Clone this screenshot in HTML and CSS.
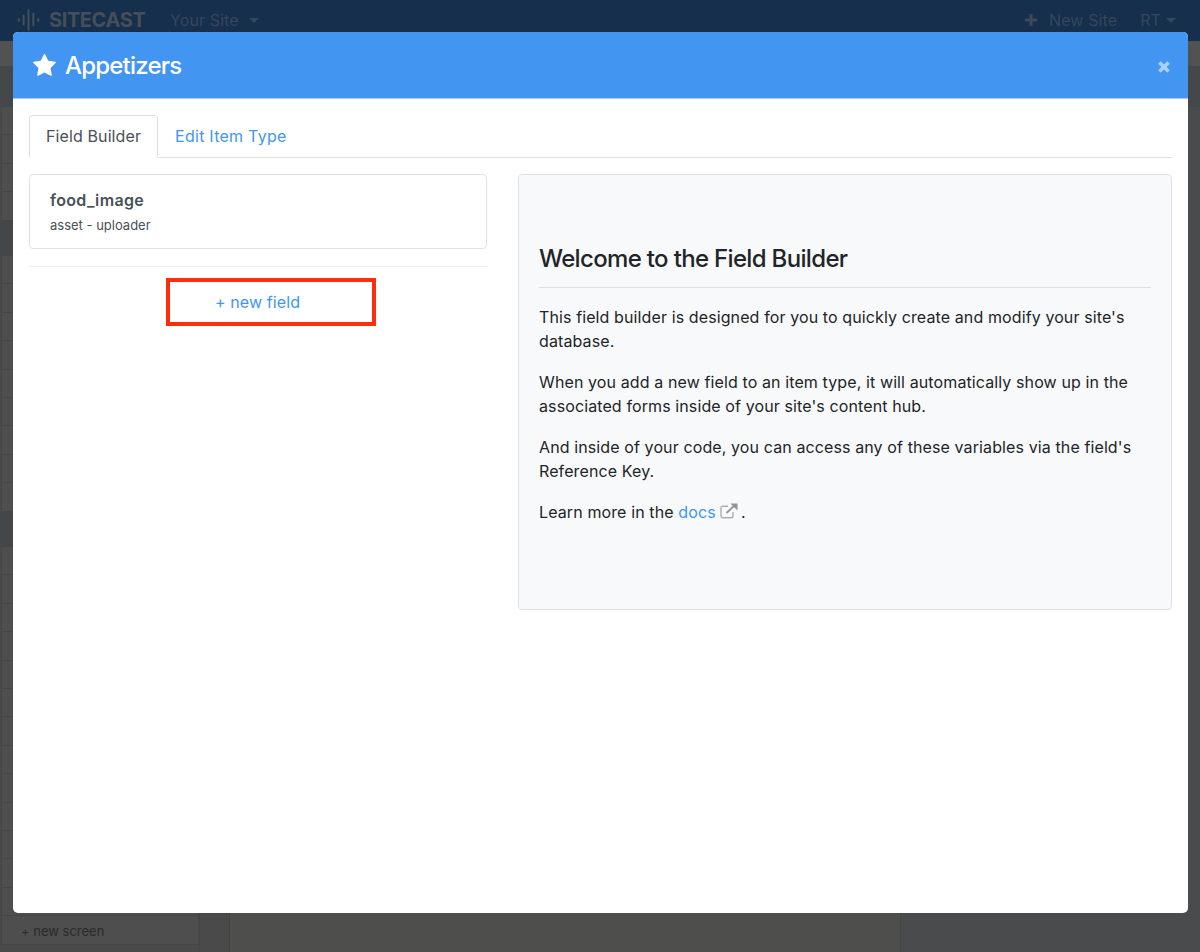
FILE: index.html
```html
<!DOCTYPE html>
<html lang="en">
<head>
<meta charset="utf-8">
<title>Appetizers - Field Builder</title>
<link rel="stylesheet" href="styles.css">
</head>
<body>
<div class="page">
  <header class="topbar">
    <div class="brand">
      <svg class="logo" viewBox="0 0 26 26" aria-hidden="true"><path d="M2 11v4M7.500 7v12M13 1v24M18.500 5v15M24 11v4"/></svg>
      <span class="brand-name">SITECAST</span>
    </div>
    <span class="site-menu">Your Site<i class="caret"></i></span>
    <span class="new-site">
      <svg class="plus" viewBox="0 0 12 12" aria-hidden="true"><path d="M4.500 0h3v4.500H12v3H7.500V12h-3V7.500H0v-3h4.500z"/></svg>
      New Site
    </span>
    <span class="user-menu">RT<i class="caret"></i></span>
  </header>
  <div class="subbar"></div>
  <div class="band"></div>
  <div class="workspace">
    <aside class="sidebar">
      <ul class="rows">
        <li></li><li></li><li></li><li></li>
      </ul>
      <div class="group"></div>
      <ul class="rows">
        <li></li><li></li><li></li><li></li><li></li><li></li><li></li><li></li><li></li>
      </ul>
      <div class="group"></div>
      <ul class="rows">
        <li></li><li></li><li></li><li></li><li></li><li></li><li></li><li></li><li></li><li></li><li></li><li></li><li></li>
        <li class="new-screen">+ new screen</li>
      </ul>
    </aside>
    <div class="gutter"></div>
    <main class="canvas"></main>
    <div class="inspector"></div>
  </div>
</div>

<div class="overlay">
  <section class="modal">
    <header class="modal-header">
      <svg class="star" viewBox="0 0 1664 1600" aria-hidden="true"><path d="M1664 615q0 22-26 48l-363 354 86 500q1 7 1 20 0 21-10.500 35.500T1321 1587q-19 0-40-12l-449-236-449 236q-22 12-40 12-21 0-31.500-14.500T301 1537q0-6 2-20l86-500L25 663Q0 636 0 615q0-37 56-46l502-73L783 41q19-41 49-41t49 41l225 455 502 73q56 9 56 46z"/></svg>
      <h1 class="modal-title">Appetizers</h1>
      <svg class="close" viewBox="0 0 12 12" aria-label="Close"><path d="M1 3.200 3.200 1 6 3.800 8.800 1 11 3.200 8.200 6 11 8.800 8.800 11 6 8.200 3.200 11 1 8.800 3.800 6z"/></svg>
    </header>
    <div class="modal-body">
      <nav class="tabs">
        <a class="tab active">Field Builder</a>
        <a class="tab">Edit Item Type</a>
      </nav>
      <div class="columns">
        <div class="fields">
          <div class="field-card">
            <div class="field-name">food_image</div>
            <div class="field-type">asset - uploader</div>
          </div>
          <hr class="rule">
          <div class="new-field-row">
            <a class="new-field">+ new field</a>
            <span class="callout"></span>
          </div>
        </div>
        <div class="welcome">
          <h2 class="welcome-title">Welcome to the Field Builder</h2>
          <hr class="welcome-rule">
          <p>This field builder is designed for you to quickly create and modify your site's database.</p>
          <p>When you add a new field to an item type, it will automatically show up in the associated forms inside of your site's content hub.</p>
          <p>And inside of your code, you can access any of these variables via the field's Reference Key.</p>
          <p class="last">Learn more in the <a class="docs">docs</a>
            <svg class="ext" viewBox="0 0 18 16" aria-hidden="true"><path class="ext-box" d="M13 9v4a1.800 1.800 0 0 1-1.800 1.800H2.800A1.800 1.800 0 0 1 1 13V5a1.800 1.800 0 0 1 1.800-1.800H8"/><path class="ext-arrow" d="M6.500 10 15 2"/><path class="ext-head" d="M10.500 0.500H17.500V7.500L15 5 12.900 3z"/></svg>
            .</p>
        </div>
      </div>
    </div>
  </section>
</div>
</body>
</html>
```

FILE: styles.css
```css
* { box-sizing: border-box; }

html, body {
  margin: 0;
  height: 952px;
  overflow: hidden;
}

body {
  position: relative;
  background: #4a4a4a;
  font-family: Inter, "Liberation Sans", sans-serif;
  font-size: 16px;
  line-height: 24px;
  color: #212529;
  letter-spacing: 0.11px;
}

/* Dimmed page behind the modal */
.page {
  display: flex;
  flex-direction: column;
  height: 952px;
}

.topbar {
  display: flex;
  align-items: center;
  height: 41px;
  flex: none;
  background: #152f4c;
  color: #37465a;
  padding-left: 17px;
  border-bottom: 1px solid #1b2f45;
}

.brand {
  display: flex;
  align-items: center;
  gap: 9px;
  width: 153px;
}

.logo {
  width: 23px;
  height: 24px;
  fill: none;
  stroke: #47505a;
  stroke-width: 2.200;
}

.brand-name {
  font-size: 20px;
  font-weight: 700;
  color: #474e57;
  letter-spacing: -0.4px;
}

.site-menu {
  display: flex;
  align-items: center;
  gap: 10px;
}

.caret {
  width: 0;
  height: 0;
  border-left: 5px solid transparent;
  border-right: 5px solid transparent;
  border-top: 5px solid currentColor;
}

.new-site {
  display: flex;
  align-items: center;
  gap: 12px;
  margin-left: auto;
}

.plus {
  width: 12px;
  height: 12px;
  fill: #3f4a56;
}

.user-menu {
  display: flex;
  align-items: center;
  gap: 5px;
  margin-left: 23px;
  margin-right: 24px;
}

.subbar {
  height: 26px;
  flex: none;
  background: #525252;
  border-bottom: 1px solid #474747;
}

.band {
  height: 40px;
  flex: none;
  background: #45484a;
}

.workspace {
  display: flex;
  flex: 1;
  min-height: 0;
}

.sidebar {
  width: 200px;
  flex: none;
  border-right: 1px solid #464646;
}

.rows {
  margin: 0;
  padding: 0;
  list-style: none;
}

.rows li {
  height: 28.400px;
  margin-left: 1px;
  background: #4e4e4e;
  border: 1px solid #454545;
  border-top: 0;
  border-left-color: #464646;
}

.group {
  height: 35.500px;
  background: #44474a;
}

.rows .new-screen {
  padding-left: 19px;
  font-size: 13px;
  line-height: 30px;
  color: #2b2b2b;
  letter-spacing: 0;
}

.gutter {
  width: 30px;
  flex: none;
  background: #4a4a4a;
  border-right: 1px solid #434343;
}

.canvas {
  width: 670px;
  flex: none;
  background: #4e4e4c;
}

.inspector {
  flex: 1;
  background: #4a4b4d;
  border-left: 1px solid #464646;
}

/* Modal */
.overlay {
  position: absolute;
  inset: 0;
  padding: 32px 12px 39px 13px;
}

.modal {
  display: flex;
  flex-direction: column;
  height: 100%;
  background: #fff;
  border-radius: 5px;
  overflow: hidden;
}

.modal-header {
  display: flex;
  align-items: center;
  gap: 9px;
  height: 67px;
  flex: none;
  padding: 2px 17px 0 20px;
  background: #4296f2;
  border-bottom: 1px solid #a3cbf7;
  color: #fff;
}

.star {
  width: 23px;
  height: 22px;
  fill: #fff;
  margin-top: -2px;
}

.modal-title {
  margin: 0;
  font-size: 24px;
  font-weight: 500;
  line-height: 30px;
  letter-spacing: -0.8px;
}

.close {
  width: 14px;
  height: 14px;
  margin-left: auto;
  margin-top: 1px;
  fill: #a9d1fb;
}

.modal-body {
  padding: 16px 16px 0;
}

.tabs {
  display: flex;
  height: 43px;
  border-bottom: 1px solid #e0e3e6;
}

.tab {
  height: 43px;
  padding: 8px 16px;
  color: #4296f2;
  border: 1px solid transparent;
  border-radius: 4px 4px 0 0;
  letter-spacing: 0.25px;
}

.tab.active {
  color: #495057;
  background: #fff;
  border-color: #dee2e6 #dee2e6 #fff;
  letter-spacing: 0.11px;
}

.columns {
  display: grid;
  grid-template-columns: 459px 654px;
  column-gap: 30px;
  margin-top: 16px;
}

.field-card {
  width: 458px;
  height: 75px;
  padding: 13px 20px;
  border: 1px solid #dee2e6;
  border-radius: 4px;
  color: #495057;
}

.field-name {
  font-weight: 600;
  line-height: 24px;
  letter-spacing: 0.35px;
}

.field-type {
  margin-top: 3px;
  font-size: 13px;
  line-height: 20px;
  letter-spacing: 0;
}

.rule {
  height: 1px;
  margin: 17px 0 11px;
  border: 0;
  background: #eceef0;
}

.new-field-row {
  position: relative;
  height: 48px;
  padding-right: 2px;
  text-align: center;
  line-height: 48px;
}

.new-field {
  color: #4296f2;
}

.callout {
  position: absolute;
  top: 0;
  left: 137px;
  width: 210px;
  height: 48px;
  border: 4px solid #ff2d0a;
}

.welcome {
  height: 436px;
  padding: 69px 20px 0;
  background: #f8f9fa;
  border: 1px solid #dee2e6;
  border-radius: 4px;
}

.welcome-title {
  margin: 0;
  font-size: 24px;
  font-weight: 500;
  line-height: 30px;
  letter-spacing: -0.67px;
}

.welcome-rule {
  height: 1px;
  margin: 13px 0 17px;
  border: 0;
  background: #dfe2e5;
}

.welcome p {
  margin: 0 0 17px;
}

.docs {
  color: #4296f2;
}

.ext {
  width: 18px;
  height: 16px;
  margin-right: -2px;
  vertical-align: -1px;
  fill: none;
}

.ext-box {
  stroke: #a9adb1;
  stroke-width: 1.400;
}

.ext-arrow {
  stroke: #8f9499;
  stroke-width: 1.800;
}

.ext-head {
  fill: #8f9499;
}
```
